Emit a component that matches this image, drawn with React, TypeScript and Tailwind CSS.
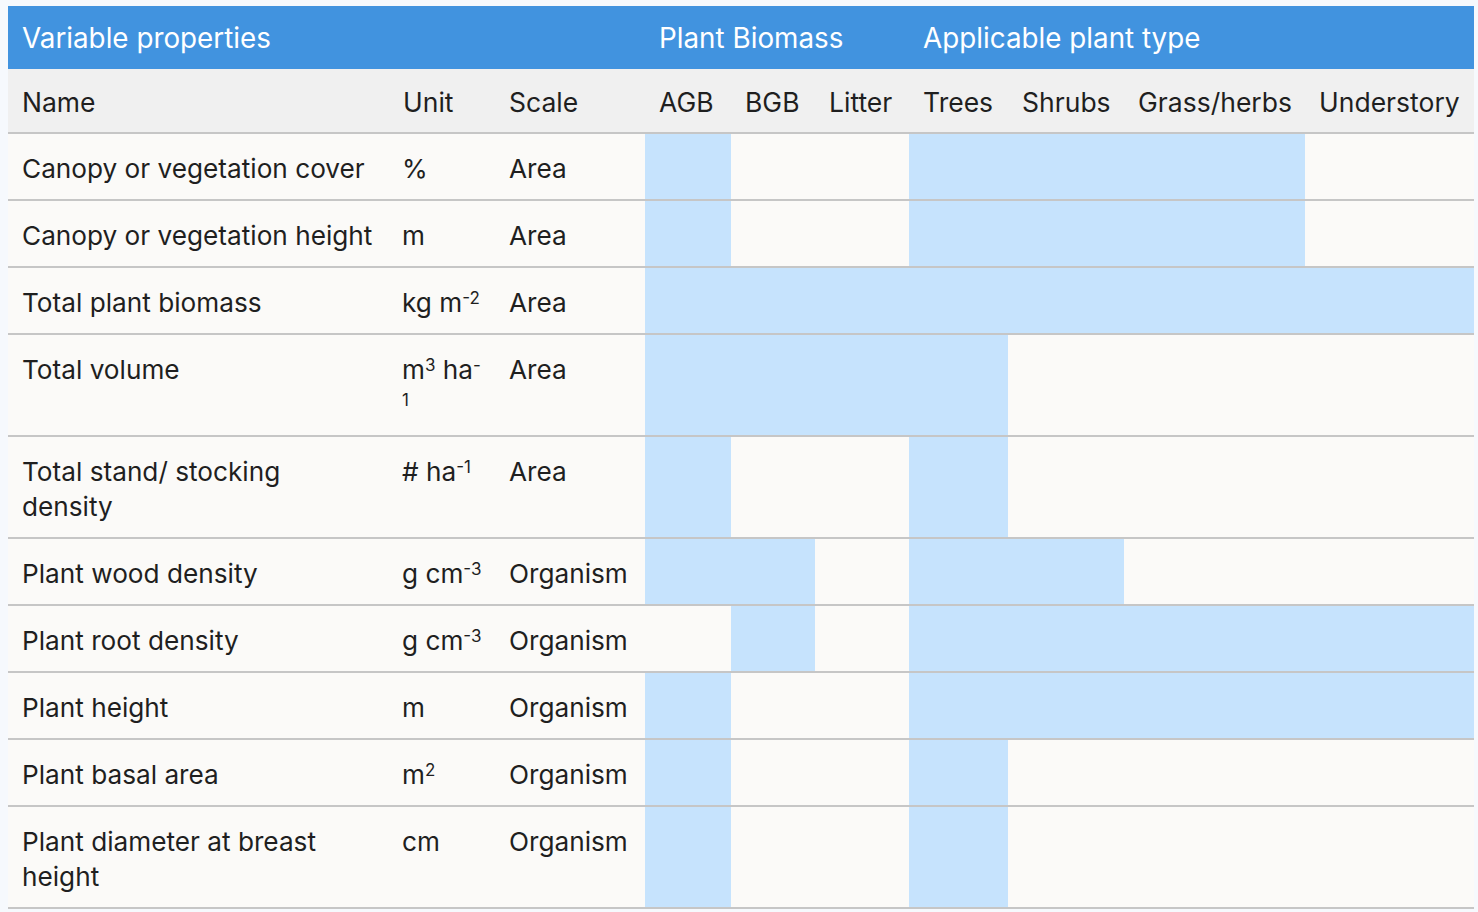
import React from 'react';

type Row = {
  name: React.ReactNode;
  unit: React.ReactNode;
  scale: string;
  // AGB, BGB, Litter, Trees, Shrubs, Grass/herbs, Understory
  marks: number[];
};

const rows: Row[] = [
  { name: 'Canopy or vegetation cover', unit: '%', scale: 'Area', marks: [1, 0, 0, 1, 1, 1, 0] },
  { name: 'Canopy or vegetation height', unit: 'm', scale: 'Area', marks: [1, 0, 0, 1, 1, 1, 0] },
  {
    name: 'Total plant biomass',
    unit: (
      <>
        kg m<sup className="text-[17px]">-2</sup>
      </>
    ),
    scale: 'Area',
    marks: [1, 1, 1, 1, 1, 1, 1],
  },
  {
    name: 'Total volume',
    unit: (
      <>
        m<sup className="text-[17px]">3</sup> ha<sup className="text-[17px]">-</sup>
        <br />
        <sup className="text-[17px]">1</sup>
      </>
    ),
    scale: 'Area',
    marks: [1, 1, 1, 1, 0, 0, 0],
  },
  {
    name: (
      <>
        Total stand/ stocking
        <br />
        density
      </>
    ),
    unit: (
      <>
        # ha<sup className="text-[17px]">-1</sup>
      </>
    ),
    scale: 'Area',
    marks: [1, 0, 0, 1, 0, 0, 0],
  },
  {
    name: 'Plant wood density',
    unit: (
      <>
        g cm<sup className="text-[17px]">-3</sup>
      </>
    ),
    scale: 'Organism',
    marks: [1, 1, 0, 1, 1, 0, 0],
  },
  {
    name: 'Plant root density',
    unit: (
      <>
        g cm<sup className="text-[17px]">-3</sup>
      </>
    ),
    scale: 'Organism',
    marks: [0, 1, 0, 1, 1, 1, 1],
  },
  { name: 'Plant height', unit: 'm', scale: 'Organism', marks: [1, 0, 0, 1, 1, 1, 1] },
  {
    name: 'Plant basal area',
    unit: (
      <>
        m<sup className="text-[17px]">2</sup>
      </>
    ),
    scale: 'Organism',
    marks: [1, 0, 0, 1, 0, 0, 0],
  },
  {
    name: (
      <>
        Plant diameter at breast
        <br />
        height
      </>
    ),
    unit: 'cm',
    scale: 'Organism',
    marks: [1, 0, 0, 1, 0, 0, 0],
  },
];

const subHeads = ['Name', 'Unit', 'Scale', 'AGB', 'BGB', 'Litter', 'Trees', 'Shrubs', 'Grass/herbs', 'Understory'];

export default function App() {
  return (
    <div
      className="min-h-screen bg-[#f6f9fd] pt-[6px] pl-[8px] text-[#1f1f1f]"
      style={{ fontFamily: 'Inter, "Liberation Sans", Arial, sans-serif' }}
    >
      <table className="table-fixed border-collapse w-[1466px] text-[26.2px] leading-[35px] font-normal">
        <colgroup>
          <col className="w-[381px]" />
          <col className="w-[106px]" />
          <col className="w-[150px]" />
          <col className="w-[86px]" />
          <col className="w-[84px]" />
          <col className="w-[94px]" />
          <col className="w-[99px]" />
          <col className="w-[116px]" />
          <col className="w-[181px]" />
          <col className="w-[169px]" />
        </colgroup>
        <thead>
          <tr className="bg-[#4193df] text-white text-[27.8px]">
            <th colSpan={3} className="text-left font-normal px-[14px] pt-[15px] pb-[13px] whitespace-nowrap">
              Variable properties
            </th>
            <th colSpan={3} className="text-left font-normal px-[14px] pt-[15px] pb-[13px] whitespace-nowrap">
              Plant Biomass
            </th>
            <th colSpan={4} className="text-left font-normal px-[14px] pt-[15px] pb-[13px] whitespace-nowrap">
              Applicable plant type
            </th>
          </tr>
          <tr className="bg-[#f0f0f0] border-b-2 border-[#c6c6c6] text-[26.5px]">
            {subHeads.map((h) => (
              <th key={h} className="text-left font-normal px-[14px] pt-[16px] pb-[12px] whitespace-nowrap">
                {h}
              </th>
            ))}
          </tr>
        </thead>
        <tbody>
          {rows.map((r, i) => (
            <tr key={i} className="bg-[#fbfaf8] border-b-2 border-[#c6c6c6]">
              <td className="align-top px-[14px] pt-[17px] pb-[13px] whitespace-nowrap">{r.name}</td>
              <td className="align-top px-[13px] pt-[17px] pb-[13px] whitespace-nowrap">{r.unit}</td>
              <td className="align-top px-[14px] pt-[17px] pb-[13px] whitespace-nowrap">{r.scale}</td>
              {r.marks.map((m, j) => (
                <td key={j} className={m ? 'bg-[#c6e3fd]' : ''} />
              ))}
            </tr>
          ))}
        </tbody>
      </table>
    </div>
  );
}
